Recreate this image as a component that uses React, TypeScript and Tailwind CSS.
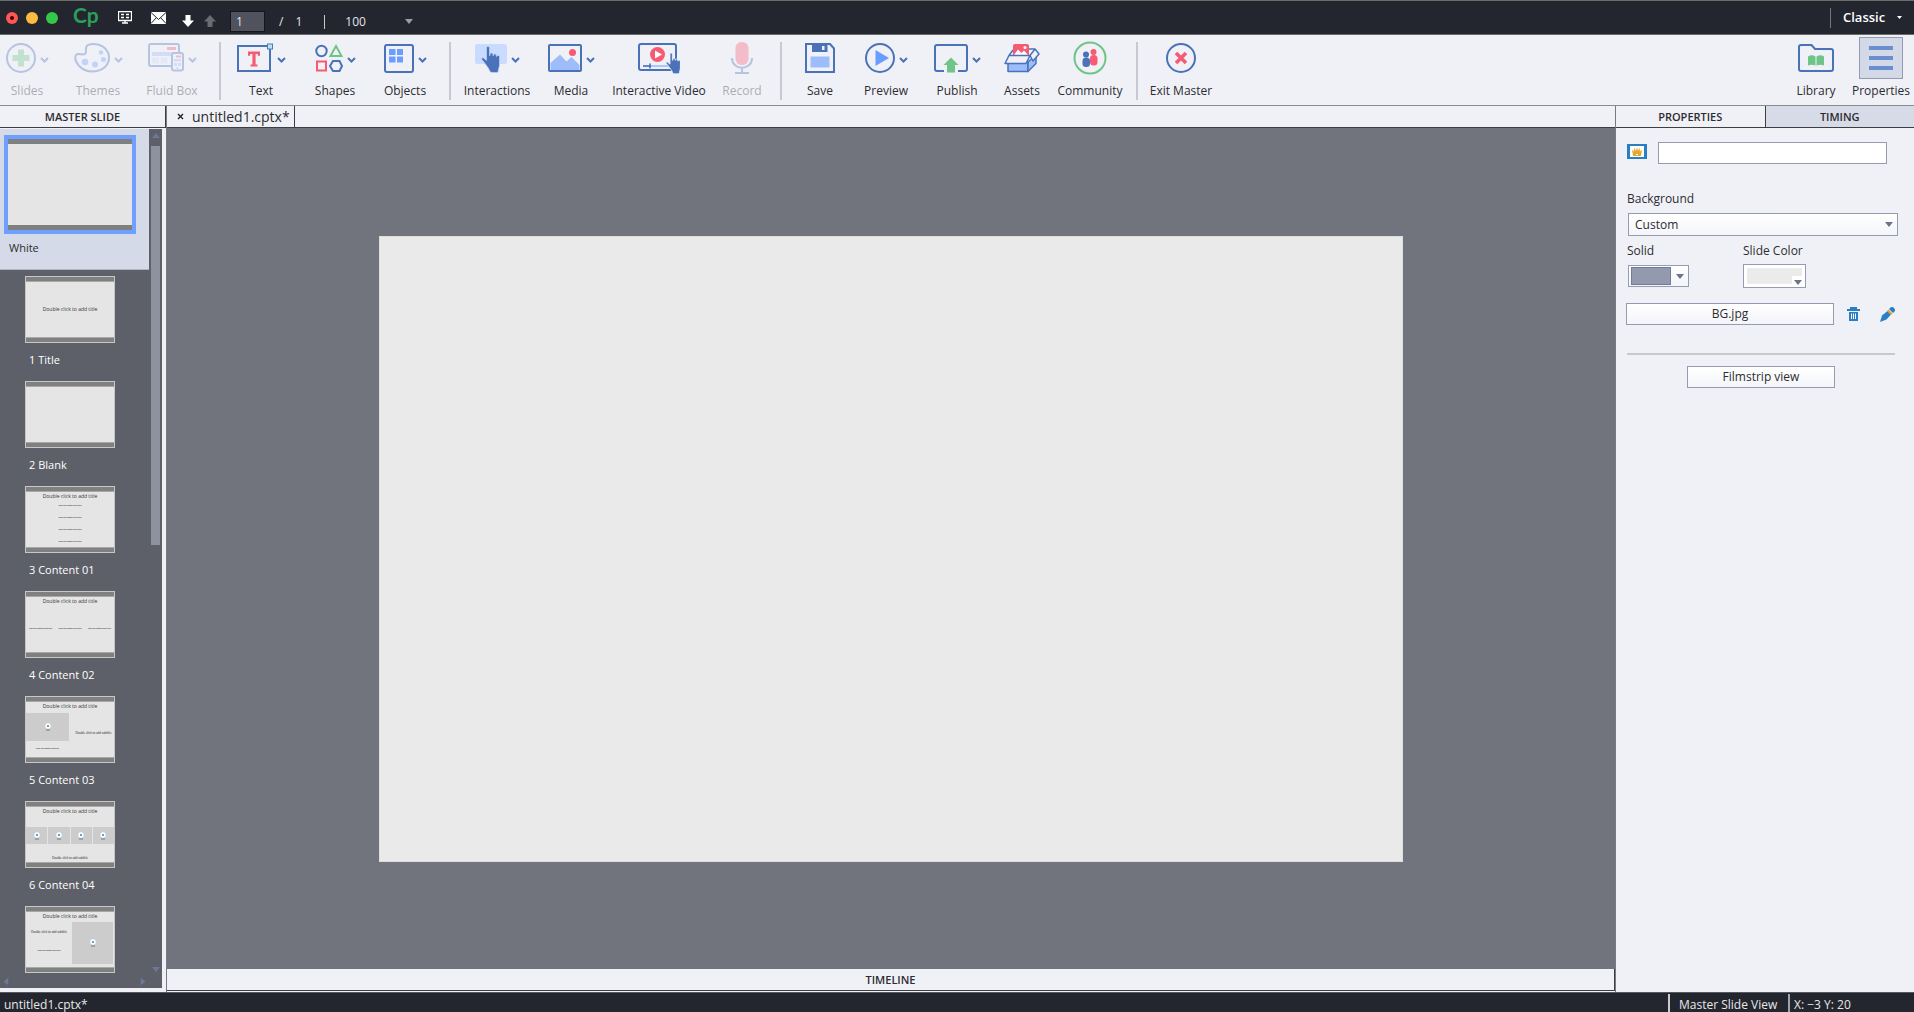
import type { ReactNode } from "react";

const BLUE = "#4a72b8";
const RED = "#f65b74";
const GREEN = "#6fc487";
const SOFT = "#9dbcfa";

const HAND =
  "M5 1.6C5 .7 5.6 0 6.5 0S8 .7 8 1.6V9h.6V7.6c0-1.6 2.8-1.4 2.8 0V9h.6v-.6c0-1.4 2.7-1.3 2.7 0V10h.5c0-1.5 2.8-1.4 2.8.2V18c0 3-1.2 4.2-1.2 6.400C16.800 26 15.500 26 13 26c-3 0-4.500 0-4.800-1.700C7.500 22 4.800 19 3.200 16.500L.3 13c-.8-1.200.7-2.400 1.900-1.400L5 14z";

function SlidesIcon() {
  return (
    <svg width="30" height="30" viewBox="0 0 30 30">
      <circle cx="15" cy="15" r="14" fill="none" stroke={BLUE} strokeWidth="2" />
      <path d="M12 6.500h6V12h5.500v6H18v5.500h-6V18H6.500v-6H12z" fill={GREEN} />
    </svg>
  );
}
function ThemesIcon() {
  return (
    <svg width="36" height="30" viewBox="0 0 36 30">
      <path
        d="M19 1C9 1 13 8 11.500 10.500 10 13 4 9.500 2 12c-3 6 5 16.500 16 16.500S35 22 35 14.500 28.500 1 19 1z"
        fill="none"
        stroke={BLUE}
        strokeWidth="2"
      />
      <circle cx="27" cy="9.500" r="2.200" fill="#6b9dff" />
      <circle cx="29.500" cy="16.500" r="2.500" fill="#6b9dff" />
      <circle cx="21" cy="21.500" r="3" fill="#6b9dff" />
      <circle cx="11" cy="19" r="3.300" fill="#6b9dff" />
    </svg>
  );
}
function FluidIcon() {
  return (
    <svg width="36" height="30" viewBox="0 0 36 30">
      <rect x="1" y="1" width="30" height="22" rx="2" fill="none" stroke={BLUE} strokeWidth="2" />
      <rect x="19" y="4" width="9" height="3" fill={RED} />
      <rect x="4" y="9" width="21" height="4" fill={SOFT} />
      <path d="M4 14.500h7v6H4zM12.500 14.500h7v6h-7z" fill="#c9dcff" />
      <rect x="24" y="10" width="11" height="17.500" rx="2" fill="#f0f1f7" stroke={BLUE} strokeWidth="2" />
      <path d="M28 12.500h5v2h-5z" fill={RED} />
      <path d="M26 16h7v2.500h-7zM26 20h3v3h-3zM30 20h3v3h-3z" fill={SOFT} />
      <circle cx="29.500" cy="25" r=".8" fill={BLUE} />
    </svg>
  );
}
function TextIcon() {
  return (
    <svg width="36" height="30" viewBox="0 0 36 30">
      <rect x="1" y="3" width="32" height="25" fill="none" stroke={BLUE} strokeWidth="2" />
      <path d="M11 8.500h12v4.200h-2.200v-1.700h-2.200v10.500h1.900v2h-7v-2h1.900V11h-2.200v1.700H11z" fill={RED} />
      <rect x="30.500" y="1" width="5" height="5" fill="#bfe0f5" stroke="#3f84a8" />
    </svg>
  );
}
function ShapesIcon() {
  return (
    <svg width="28" height="30" viewBox="0 0 28 30" fill="none" strokeWidth="2">
      <circle cx="6.500" cy="8" r="5.200" stroke={BLUE} />
      <path d="M21 3l5.500 10h-11z" stroke={GREEN} />
      <path d="M2 18.500h9v9H2z" stroke={RED} />
      <path d="M18 18h6.500l2.500 5-2.500 5H18l-3-5z" stroke={BLUE} />
    </svg>
  );
}
function ObjectsIcon() {
  return (
    <svg width="30" height="30" viewBox="0 0 30 30">
      <rect x="1" y="2" width="28" height="27" rx="2" fill="none" stroke={BLUE} strokeWidth="2" />
      <path d="M5 6h6.500v6H5zM13 6h6v6h-6zM5 13.500h6.500v6H5zM13 13.500h6v6h-6z" fill="#6b9dff" />
    </svg>
  );
}
function InteractionsIcon() {
  return (
    <svg width="32" height="30" viewBox="0 0 32 30">
      <rect y="1" width="32" height="20" rx="2" fill="#c9dcff" />
      <g transform="translate(6.500 3.500)">
        <path d={HAND} fill={BLUE} stroke="#c9dcff" strokeWidth=".6" />
      </g>
    </svg>
  );
}
function MediaIcon() {
  return (
    <svg width="34" height="30" viewBox="0 0 34 30">
      <path d="M2.500 28V20L12 11.500l6.500 7 5-4.500 8 8V28z" fill={SOFT} />
      <rect x="1" y="2" width="32" height="26" rx="1" fill="none" stroke={BLUE} strokeWidth="2" />
      <circle cx="24.500" cy="9.500" r="3.500" fill={RED} />
    </svg>
  );
}
function VideoIcon() {
  return (
    <svg width="42" height="34" viewBox="0 0 42 34">
      <rect x="1" y="3" width="37" height="26" rx="2" fill="none" stroke={BLUE} strokeWidth="2" />
      <circle cx="19.500" cy="13.500" r="7.500" fill={RED} />
      <path d="M17 9.500v8l7-4z" fill="#fff" />
      <path d="M5 25h26" stroke={SOFT} strokeWidth="1.600" />
      <path d="M5 25h8M12 22.500v5" stroke={BLUE} strokeWidth="1.600" />
      <g transform="translate(28 12) scale(.8)">
        <path d={HAND} fill={BLUE} stroke="#f0f1f7" strokeWidth="1" />
      </g>
    </svg>
  );
}
function RecordIcon() {
  return (
    <svg width="24" height="34" viewBox="0 0 24 34">
      <rect x="5.500" y="1" width="13" height="23" rx="6" fill={RED} />
      <path d="M2 17c0 13 20 13 20 0M12 27v5M5 32h14" fill="none" stroke={BLUE} strokeWidth="2" />
    </svg>
  );
}
function SaveIcon() {
  return (
    <svg width="30" height="30" viewBox="0 0 30 30">
      <path d="M1 1h24l4 4.500V29H1z" fill="none" stroke={BLUE} strokeWidth="2" />
      <path d="M7 1h15.500v8H7z" fill={BLUE} />
      <path d="M17 3h2.500v4H17z" fill="#f0f1f7" />
      <path d="M5.500 13.500h19v11h-19z" fill={SOFT} />
    </svg>
  );
}
function PreviewIcon() {
  return (
    <svg width="30" height="30" viewBox="0 0 30 30">
      <circle cx="15" cy="15" r="14" fill="none" stroke={BLUE} strokeWidth="2" />
      <path d="M10.500 7v16L24 15z" fill="#6b9dff" />
    </svg>
  );
}
function PublishIcon() {
  return (
    <svg width="34" height="30" viewBox="0 0 34 30">
      <path d="M10 28H3a2 2 0 0 1-2-2V4a2 2 0 0 1 2-2h28a2 2 0 0 1 2 2v22a2 2 0 0 1-2 2h-7" fill="none" stroke={BLUE} strokeWidth="2" />
      <path d="M17 14.500l7.500 7.500H21v7.500h-8V22H9.500z" fill={GREEN} />
    </svg>
  );
}
function AssetsIcon() {
  return (
    <svg width="36" height="30" viewBox="0 0 36 30" strokeWidth="1.500" strokeLinejoin="round">
      <path d="M9 12V3q0-2 2-2h12q2 0 2 2v9z" fill={RED} />
      <path d="M10 12l4-5.500 3.500 3.500 2.500-2.500 4 4.500z" fill="#fff" />
      <circle cx="21" cy="4.500" r="1.500" fill="#fff" />
      <path d="M4 19h20v9.500H4z" fill={SOFT} stroke={BLUE} />
      <path d="M24 19l8-7v8.500l-8 8z" fill={SOFT} stroke={BLUE} />
      <path d="M1 20.500L5 12.500h21l-4 8z" fill="#f0f1f7" stroke={BLUE} />
      <path d="M26 12.500l5-6.500 4 5-6 7z" fill="#f0f1f7" stroke={BLUE} />
      <path d="M5 12.500L9 7M25 6h6" fill="none" stroke={BLUE} />
    </svg>
  );
}
function CommunityIcon() {
  return (
    <svg width="34" height="34" viewBox="0 0 34 34">
      <circle cx="17" cy="17" r="15.500" fill="none" stroke={GREEN} strokeWidth="2" />
      <circle cx="20.500" cy="11" r="3" fill={RED} />
      <rect x="17" y="14" width="7.500" height="10.500" rx="3.500" fill={RED} />
      <circle cx="13" cy="13.500" r="3" fill={BLUE} />
      <rect x="9.500" y="16.500" width="7.500" height="9.500" rx="3.500" fill={BLUE} />
    </svg>
  );
}
function ExitIcon() {
  return (
    <svg width="30" height="30" viewBox="0 0 30 30">
      <circle cx="15" cy="15" r="14" fill="none" stroke={BLUE} strokeWidth="2" />
      <path d="M10 10l10 10M20 10L10 20" stroke={RED} strokeWidth="3.600" />
    </svg>
  );
}
function LibraryIcon() {
  return (
    <svg width="36" height="28" viewBox="0 0 36 28">
      <path d="M3 1h10.500l3.500 4h16q2 0 2 2v18q0 2-2 2H3q-2 0-2-2V3q0-2 2-2z" fill="none" stroke={BLUE} strokeWidth="2" />
      <path d="M10 12.500q4-2.500 7.500 0v9q-4-1.500-7.500 0zM18.500 12.500q4-2.500 7.500 0v9q-4-1.500-7.500 0z" fill={GREEN} />
    </svg>
  );
}
function Chevron() {
  return (
    <svg width="9" height="6" viewBox="0 0 9 6" className="mt-1">
      <path d="M1 1l3.500 3.500L8 1" fill="none" stroke={BLUE} strokeWidth="2" />
    </svg>
  );
}
function Triangle({ className }: { className: string }) {
  return (
    <svg width="8" height="5" viewBox="0 0 8 5" className={className} fill="currentColor">
      <path d="M0 0h8L4 5z" />
    </svg>
  );
}

function Tool(p: { label: string; w: string; icon: ReactNode; menu?: boolean; off?: boolean }) {
  return (
    <button disabled={p.off} className={`flex shrink-0 flex-col items-center pt-[5px] ${p.w} ${p.off ? "opacity-35" : ""}`}>
      <span className="flex h-9 items-center gap-1">
        {p.icon}
        {p.menu && <Chevron />}
      </span>
      <span className="mt-[7px] text-[12px] leading-4 whitespace-nowrap">{p.label}</span>
    </button>
  );
}
function Divider({ className }: { className: string }) {
  return <div className={`mt-[7px] h-[58px] w-0.5 shrink-0 bg-[#c6c8d2] ${className}`} />;
}

function SlideTitle() {
  return <div className="pt-px text-center text-[5px] leading-[6px] text-[#333]">Double click to add title</div>;
}
function Subtitle() {
  return <div className="text-center font-['Lato',sans-serif] text-[3px] leading-[4px] whitespace-nowrap text-[#333]">Double click to add subtitle</div>;
}
function Caption() {
  return <div className="text-center font-['Lato',sans-serif] text-[2px] leading-[3px] whitespace-nowrap text-[#222]">Type the caption text here</div>;
}
function Placeholder({ className }: { className: string }) {
  return (
    <div className={`flex flex-col items-center justify-center bg-[#cccccc] ${className}`}>
      <svg width="6" height="8" viewBox="0 0 6 8">
        <circle cx="3" cy="3" r="2.700" fill="#fff" />
        <circle cx="3" cy="3" r="1.100" fill="#2b8fd0" />
        <path d="M1 7h4" stroke="#777" />
      </svg>
    </div>
  );
}

const slides: { id: number; name?: string; body: ReactNode }[] = [
  {
    id: 1,
    name: "1 Title",
    body: <div className="flex h-full items-center justify-center text-[5px] text-[#333]">Double click to add title</div>,
  },
  { id: 2, name: "2 Blank", body: null },
  {
    id: 3,
    name: "3 Content 01",
    body: (
      <>
        <SlideTitle />
        <div className="flex flex-col gap-[9px] pt-[5px]">
          <Caption />
          <Caption />
          <Caption />
          <Caption />
        </div>
      </>
    ),
  },
  {
    id: 4,
    name: "4 Content 02",
    body: (
      <>
        <SlideTitle />
        <div className="flex justify-between px-[3px] pt-[23px]">
          <Caption />
          <Caption />
          <Caption />
        </div>
      </>
    ),
  },
  {
    id: 5,
    name: "5 Content 03",
    body: (
      <>
        <SlideTitle />
        <div className="flex items-start pt-1">
          <div className="w-[43px]">
            <Placeholder className="h-7" />
            <div className="pt-1.5">
              <Caption />
            </div>
          </div>
          <div className="flex-1 pt-[18px] pl-1">
            <Subtitle />
          </div>
        </div>
      </>
    ),
  },
  {
    id: 6,
    name: "6 Content 04",
    body: (
      <>
        <SlideTitle />
        <div className="flex gap-px pt-[13px] pb-3">
          <Placeholder className="h-[17px] flex-1" />
          <Placeholder className="h-[17px] flex-1" />
          <Placeholder className="h-[17px] flex-1" />
          <Placeholder className="h-[17px] flex-1" />
        </div>
        <Subtitle />
      </>
    ),
  },
  {
    id: 7,
    body: (
      <>
        <SlideTitle />
        <div className="flex pt-[3px]">
          <div className="flex flex-1 flex-col gap-[15px] pt-2">
            <Subtitle />
            <Caption />
          </div>
          <Placeholder className="mr-px h-[42px] w-[41px]" />
        </div>
      </>
    ),
  },
];

function Sidebar() {
  return (
    <aside className="flex w-[167px] shrink-0 flex-col border-r border-[#777a80] bg-[#f0f1f7]">
      <h2 className="h-[22px] border-r border-b border-[#3c3e42] text-center text-[11px] leading-[22px] font-semibold">MASTER SLIDE</h2>
      <div className="mt-px mr-1 mb-1 flex min-h-0 flex-1 bg-[#5d6068]">
        <div className="flex min-w-0 flex-1 flex-col">
          <div className="min-h-0 flex-1 overflow-hidden">
            <button className="flex h-[141px] w-full flex-col border-b border-[#b0b6c2] bg-[#d4dae7] pt-1.5 pl-1 text-left">
              <div className="h-[99px] w-[132px] border-4 border-[#6fa0ff]">
                <div className="h-full border-y-[5px] border-[#808080] bg-[#e5e5e5]" />
              </div>
              <div className="mt-1.5 pl-[5px] text-[11px] leading-4">White</div>
            </button>
            {slides.map((s) => (
              <button
                key={s.id}
                aria-label={`Master slide ${s.id}`}
                className="flex h-[105px] w-full flex-col pt-1.5 pl-[25px] text-left text-white"
              >
                <div className="h-[67px] w-[90px] border border-[#c6c8c8] bg-[#808080] py-1 text-black">
                  <div className="h-full overflow-hidden border-y border-[#a8a8a8] bg-[#e5e5e5]">{s.body}</div>
                </div>
                {s.name && <div className="mt-[9px] pl-1 text-[11px] leading-4">{s.name}</div>}
              </button>
            ))}
          </div>
          <div className="flex h-[14px] shrink-0 items-center justify-between px-0.5 text-[#6d7796]">
            <Triangle className="rotate-90" />
            <Triangle className="-rotate-90" />
          </div>
        </div>
        <div className="flex w-[13px] shrink-0 flex-col items-center pt-1 pb-4 text-[#6d7796]">
          <Triangle className="rotate-180" />
          <div className="mt-2 h-[399px] w-[9px] bg-[#8e919e]" />
          <Triangle className="mt-auto" />
        </div>
      </div>
    </aside>
  );
}

function Properties() {
  const box = "border border-[#959bb0] bg-linear-to-b from-white to-[#f4f5f9]";
  return (
    <aside className="flex w-[299px] shrink-0 flex-col border-l border-[#777a80] bg-[#f0f1f7] text-[12px]">
      <div className="flex h-[22px] border-b border-[#3c3e42] text-[11px] leading-[22px] font-semibold">
        <button className="flex-1">PROPERTIES</button>
        <button className="flex-1 border-l border-[#3c3e42] bg-[#d7dbe8]">TIMING</button>
      </div>
      <div className="flex flex-col pr-4 pl-[11px]">
        <div className="mt-[14px] flex items-start gap-[11px] pr-[11px]">
          <svg width="20" height="15" viewBox="0 0 20 15" className="mt-0.5">
            <rect width="20" height="15" fill="#2a7fc4" />
            <rect x="3" y="2" width="14" height="11" fill="#fff" />
            <path d="M6 12L5 5.500l2 2L7.500 3.500l1.500 3.500L10 3l1 4 1.500-3.500.5 4 2-2L14 12z" fill="#e5a82e" />
            <path d="M9 10h2v1H9z" fill="#fff" />
          </svg>
          <input aria-label="Name" className="h-[22px] min-w-0 flex-1 border border-[#959bb0] bg-white px-1" />
        </div>
        <label htmlFor="bg" className="mt-[27px] leading-4">
          Background
        </label>
        <div className={`relative mt-[6px] ml-px h-[23px] ${box}`}>
          <select id="bg" className="h-full w-full appearance-none bg-transparent px-1.5 outline-none">
            <option>Custom</option>
          </select>
          <Triangle className="pointer-events-none absolute top-2 right-1 text-[#6b7391]" />
        </div>
        <div className="mt-[7px] flex leading-4">
          <div className="w-[116px]">
            <div>Solid</div>
            <button aria-label="Solid fill" className={`mt-[6px] ml-px flex h-[22px] w-[61px] items-center gap-[5px] pl-0.5 ${box}`}>
              <span className="h-[18px] w-10 border border-[#747b99] bg-[#949aae]" />
              <Triangle className="text-[#6b7391]" />
            </button>
          </div>
          <div>
            <div>Slide Color</div>
            <button aria-label="Slide color" className="mt-[5px] flex h-6 w-[63px] items-center border border-[#959bb0] bg-white px-[3px]">
              <span className="flex h-4 w-full items-end justify-end bg-[#ebebeb]">
                <span className="flex h-2 w-[10px] items-center justify-end bg-white pt-1">
                  <Triangle className="text-[#6b7391]" />
                </span>
              </span>
            </button>
          </div>
        </div>
        <div className="mt-[15px] flex items-center">
          <button className={`-ml-px h-[22px] w-[208px] ${box}`}>BG.jpg</button>
          <button aria-label="Delete" className="ml-[13px]">
            <svg width="13" height="14" viewBox="0 0 13 14">
              <path d="M3 0h7v2h3v2H0V2h3zM2 5h9v9H2z" fill="#2a7fc4" />
              <path d="M4.500 6.500V12M6.500 6.500V12M8.500 6.500V12" stroke="#fff" />
            </svg>
          </button>
          <button aria-label="Edit" className="ml-5">
            <svg width="15" height="15" viewBox="0 0 15 15">
              <path d="M0 15L2 8.500 7.500 4l3.500 3.500-4.500 5z" fill="#2a7fc4" />
              <path d="M7 4l1.500-1.500 4 4L11 8z" fill="#e8a628" />
              <path d="M9 2q2.500-3.500 5-1t-1 5z" fill="#2a7fc4" />
            </svg>
          </button>
        </div>
        <hr className="mt-7 mr-[3px] border-t-2 border-[#c8c9cc]" />
        <button className={`mt-[11px] mr-[3px] h-[22px] w-[148px] self-center ${box}`}>Filmstrip view</button>
      </div>
    </aside>
  );
}

function TitleBar() {
  return (
    <header className="flex h-[35px] shrink-0 items-center border-t border-b border-[#6b6b68] bg-[#23262e] pl-1.5 text-[12px] text-[#e4e4e6]">
      <div className="flex gap-2">
        <span className="flex size-3 items-center justify-center rounded-full bg-[#fc5753]">
          <span className="size-1 rounded-full bg-[#400]" />
        </span>
        <span className="size-3 rounded-full bg-[#fdbc40]" />
        <span className="size-3 rounded-full bg-[#34c84a]" />
      </div>
      <div className="ml-[15px] w-7 pb-1.5 font-['Lato',sans-serif] text-[21px] leading-7 font-bold text-[#2c9d5b]">Cp</div>
      <button aria-label="Notes" className="ml-[17px]">
        <svg width="14" height="13" viewBox="0 0 14 13" fill="none" stroke="#fff">
          <path d="M.5.500h13v9H.5zM4 12h6M7 10v2M3 3.500h3M8 3.500h3M3 6.500h3M8 6.500h3" strokeWidth="1.300" />
        </svg>
      </button>
      <button aria-label="Mail" className="ml-[19px]">
        <svg width="15" height="12" viewBox="0 0 15 12">
          <path d="M0 0h15v12H0z" fill="#fff" />
          <path d="M0 .5l7.500 7 7.500-7M0 11.500l5.500-6M15 11.500l-5.500-6" fill="none" stroke="#23262e" />
        </svg>
      </button>
      <button aria-label="Next" className="mt-1.5 ml-4">
        <svg width="12" height="12" viewBox="0 0 12 12">
          <path d="M3.500 0h5v5.500H12L6 12 0 5.500h3.500z" fill="#fff" />
        </svg>
      </button>
      <button aria-label="Previous" className="mt-1.5 ml-2.5">
        <svg width="12" height="12" viewBox="0 0 12 12">
          <path d="M3.500 12h5V6.500H12L6 0 0 6.500h3.500z" fill="#6a6c73" />
        </svg>
      </button>
      <input
        aria-label="Slide number"
        defaultValue="1"
        className="mt-2 ml-[14px] h-[21px] w-[35px] border border-[#15161a] bg-[#50535d] pl-[5px] outline-none"
      />
      <span className="mt-2 ml-[14px]">/</span>
      <span className="mt-2 ml-3">1</span>
      <span className="mt-2 ml-[22px] h-[14px] w-px bg-[#c8c8ca]" />
      <button className="mt-2 ml-[20px] flex w-[68px] items-center justify-between">
        100
        <Triangle className="text-[#9a9da6]" />
      </button>
      <div className="ml-auto h-5 w-px bg-[#777]" />
      <button className="ml-3 mr-3 flex w-[59px] items-center justify-between text-[13px] font-semibold text-white">
        Classic
        <svg width="5" height="3" viewBox="0 0 5 3">
          <path d="M0 0h5L2.500 3z" fill="#fff" />
        </svg>
      </button>
    </header>
  );
}

export default function App() {
  return (
    <div className="flex h-screen flex-col overflow-hidden bg-[#f0f1f7] font-['Open_Sans','Noto_Sans',sans-serif] text-[#2c2c30]">
      <TitleBar />
      <nav className="flex h-[71px] shrink-0 items-start border-b border-[#8a8b8e]">
        <Tool label="Slides" w="w-[54px]" icon={<SlidesIcon />} menu off />
        <Tool label="Themes" w="w-[88px]" icon={<ThemesIcon />} menu off />
        <Tool label="Fluid Box" w="w-[60px]" icon={<FluidIcon />} menu off />
        <Divider className="ml-[17px] mr-2" />
        <Tool label="Text" w="w-16" icon={<TextIcon />} menu />
        <Tool label="Shapes" w="w-[84px]" icon={<ShapesIcon />} menu />
        <Tool label="Objects" w="w-14" icon={<ObjectsIcon />} menu />
        <Divider className="ml-4 mr-2.5" />
        <Tool label="Interactions" w="w-[72px]" icon={<InteractionsIcon />} menu />
        <Tool label="Media" w="w-[76px]" icon={<MediaIcon />} menu />
        <Tool label="Interactive Video" w="w-[100px]" icon={<VideoIcon />} />
        <Tool label="Record" w="w-[66px]" icon={<RecordIcon />} off />
        <Divider className="ml-[5px] mr-2.5" />
        <Tool label="Save" w="w-14" icon={<SaveIcon />} />
        <Tool label="Preview" w="w-[76px]" icon={<PreviewIcon />} menu />
        <Tool label="Publish" w="w-[66px]" icon={<PublishIcon />} menu />
        <Tool label="Assets" w="w-16" icon={<AssetsIcon />} />
        <Tool label="Community" w="w-[72px]" icon={<CommunityIcon />} />
        <Divider className="ml-2.5 mr-[7px]" />
        <Tool label="Exit Master" w="w-[72px]" icon={<ExitIcon />} />
        <div className="ml-auto flex">
          <Tool label="Library" w="w-[64px]" icon={<LibraryIcon />} />
          <button className="flex w-[66px] flex-col items-center pt-0.5">
            <span className="flex h-[42px] w-11 flex-col items-center justify-center gap-1.5 border border-[#959bb0] bg-[#d3d9e7]">
              <span className="h-1 w-6 bg-[#6a8fd0]" />
              <span className="h-1 w-6 bg-[#6a8fd0]" />
              <span className="h-1 w-6 bg-[#6a8fd0]" />
            </span>
            <span className="mt-1 text-[12px] leading-4">Properties</span>
          </button>
        </div>
      </nav>
      <div className="flex min-h-0 flex-1">
        <Sidebar />
        <main className="flex min-w-0 flex-1 flex-col">
          <div className="flex h-[22px] shrink-0 border-b border-[#3c3e42]">
            <div className="flex w-[128px] items-center gap-2 border-r border-[#3c3e42] pl-2.5">
              <button aria-label="Close" className="mb-px">
                <svg width="7" height="7" viewBox="0 0 7 7">
                  <path d="M1 1l5 5M6 1L1 6" stroke="#222" strokeWidth="1.400" />
                </svg>
              </button>
              <span className="text-[14px] leading-5">untitled1.cptx*</span>
            </div>
          </div>
          <div className="flex min-h-0 flex-1 items-center justify-center bg-[#71747c]">
            <div className="aspect-[1024/626] w-[1024px] max-w-full border border-[#dededc] bg-[#eaeaea]" />
          </div>
          <h2 className="mb-px h-[22px] shrink-0 border-r border-b border-[#3c3e42] text-center text-[11px] leading-[22px] font-semibold">
            TIMELINE
          </h2>
        </main>
        <Properties />
      </div>
      <footer className="flex h-[20px] shrink-0 border-t border-[#55585a] bg-[#23262e] pt-px text-[12px] leading-[22px] text-[#e8e8ea]">
        <span className="pl-1">untitled1.cptx*</span>
        <span className="ml-auto w-[120px] border-l-2 border-[#c8cad4] pl-[9px]">Master Slide View</span>
        <span className="w-[126px] border-l-2 border-[#a0a2ac] pl-1">X: −3 Y: 20</span>
      </footer>
    </div>
  );
}
